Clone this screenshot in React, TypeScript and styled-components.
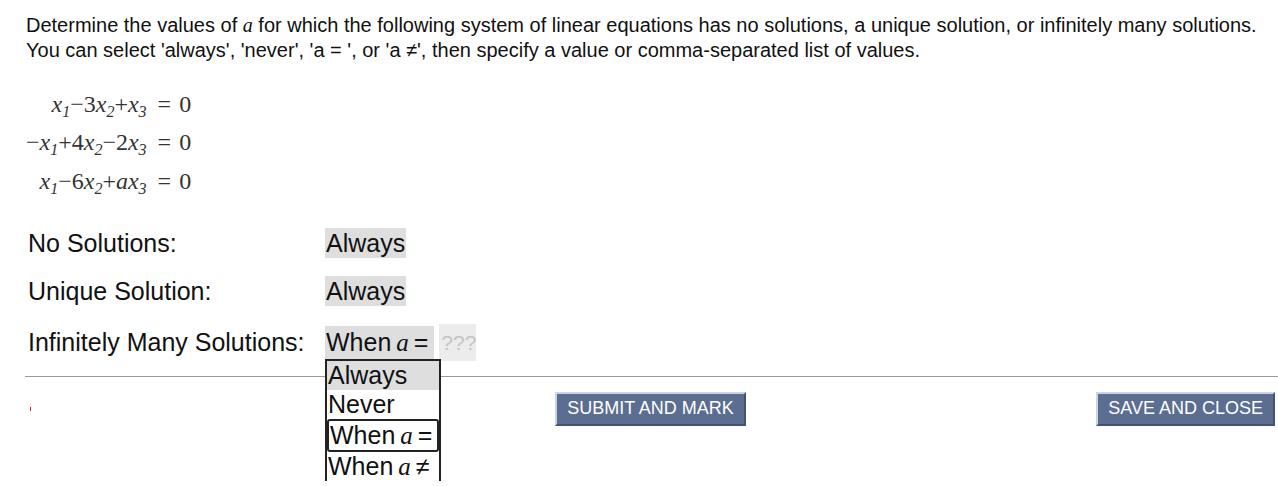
import React from "react";
import styled, { createGlobalStyle } from "styled-components";

const GlobalStyle = createGlobalStyle`
  html, body {
    margin: 0;
    padding: 0;
    background: #fff;
  }
  body {
    font-family: "Liberation Sans", Arial, sans-serif;
    color: #111;
  }
`;

const Page = styled.div`
  width: 1278px;
  height: 486px;
  overflow: hidden;
  padding: 13px 3px 0 26px;
  box-sizing: border-box;
`;

const Prompt = styled.p`
  margin: 0;
  font-size: 20px;
  line-height: 25px;
`;

const MathVar = styled.i`
  font-family: "Liberation Serif", "Times New Roman", serif;
  font-style: italic;
`;

const EqTable = styled.table`
  margin: 22px 0 0 0;
  border-collapse: collapse;
  font-family: "Liberation Serif", "Times New Roman", serif;
  font-size: 24px;
  color: #333;
`;

const EqLhs = styled.td`
  text-align: right;
  padding: 0;
  height: 38.5px;
  white-space: nowrap;
`;

const EqRhs = styled.td`
  padding: 0 0 0 11px;
  white-space: nowrap;
  word-spacing: 2px;
`;

const Sub = styled.sub`
  font-size: 16px;
  vertical-align: -5px;
  line-height: 0;
  font-style: italic;
`;

const Answers = styled.div`
  margin-top: 27px;
  margin-left: 2px;
  display: grid;
  grid-template-columns: 297px 1fr;
  row-gap: 18px;
  align-items: center;
`;

const Label = styled.div`
  font-size: 25px;
  line-height: 30px;
`;

const ValueCell = styled.div`
  display: flex;
  align-items: center;
  gap: 5px;
  position: relative;
`;

const Choice = styled.div`
  background: #dedede;
  font-size: 25px;
  line-height: 30px;
  height: 30px;
  padding: 0 1px;
  white-space: nowrap;
`;

const ChoiceWide = styled(Choice)`
  height: 33px;
  line-height: 33px;
  padding: 0 6px 0 1px;
  word-spacing: -2px;
`;

const BlankInput = styled.div`
  background: #ececec;
  color: #c4c4c4;
  font-size: 21px;
  height: 37px;
  line-height: 37px;
  padding: 0 2px;
  width: 33px;
`;

const Menu = styled.ul`
  position: absolute;
  top: 35px;
  left: 0;
  width: 112px;
  margin: 0;
  padding: 0;
  list-style: none;
  border: 2px solid #222;
  border-bottom: none;
  background: #fff;
  z-index: 2;
`;

const MenuItem = styled.li<{ $hover?: boolean; $focus?: boolean }>`
  font-size: 25px;
  height: ${(p) => (p.$focus ? "33px" : "29px")};
  line-height: 29px;
  padding: 0 1px;
  background: ${(p) => (p.$hover ? "#dedede" : "transparent")};
  border: ${(p) => (p.$focus ? "2px solid #222" : "none")};
  border-radius: ${(p) => (p.$focus ? "3px" : "0")};
  box-sizing: border-box;
  white-space: nowrap;
  word-spacing: -2px;
`;

const Rule = styled.hr`
  margin: 15px -3px 0 -1px;
  border: none;
  border-top: 1px solid #999;
  height: 0;
`;

const Footer = styled.div`
  display: grid;
  grid-template-columns: 1fr auto 1fr;
  align-items: center;
  margin-top: 15px;
`;

const Marker = styled.span`
  justify-self: start;
  display: block;
  width: 1px;
  height: 4px;
  margin-left: 4px;
  background: #d22;
`;

const ActionButton = styled.button<{ $end?: boolean }>`
  justify-self: ${(p) => (p.$end ? "end" : "center")};
  font-family: "Liberation Sans", Arial, sans-serif;
  font-size: 18px;
  color: #fff;
  background: #5b6d90;
  border-style: solid;
  border-width: 2px;
  border-color: #c9d4e4 #44536f #44536f #c9d4e4;
  padding: 0 10px;
  height: 34px;
  cursor: pointer;
`;

function A() {
  return <MathVar>a</MathVar>;
}

function X({ n }: { n: number }) {
  return (
    <>
      <MathVar>x</MathVar>
      <Sub>{n}</Sub>
    </>
  );
}

export default function App() {
  return (
    <>
      <GlobalStyle />
      <Page>
        <Prompt>
          Determine the values of <A /> for which the following system of
          linear equations has no solutions, a unique solution, or infinitely
          many solutions.
          <br />
          You can select 'always', 'never', 'a = ', or 'a ≠', then specify a
          value or comma-separated list of values.
        </Prompt>

        <EqTable>
          <tbody>
            <tr>
              <EqLhs>
                <X n={1} />−3<X n={2} />+<X n={3} />
              </EqLhs>
              <EqRhs>= 0</EqRhs>
            </tr>
            <tr>
              <EqLhs>
                −<X n={1} />+4<X n={2} />−2<X n={3} />
              </EqLhs>
              <EqRhs>= 0</EqRhs>
            </tr>
            <tr>
              <EqLhs>
                <X n={1} />−6<X n={2} />+<MathVar>a</MathVar>
                <X n={3} />
              </EqLhs>
              <EqRhs>= 0</EqRhs>
            </tr>
          </tbody>
        </EqTable>

        <Answers>
          <Label>No Solutions:</Label>
          <ValueCell>
            <Choice>Always</Choice>
          </ValueCell>

          <Label>Unique Solution:</Label>
          <ValueCell>
            <Choice>Always</Choice>
          </ValueCell>

          <Label>Infinitely Many Solutions:</Label>
          <ValueCell>
            <ChoiceWide>
              When <A /> =
            </ChoiceWide>
            <BlankInput>???</BlankInput>
            <Menu>
              <MenuItem $hover>Always</MenuItem>
              <MenuItem>Never</MenuItem>
              <MenuItem $focus>
                When <A /> =
              </MenuItem>
              <MenuItem>
                When <A /> ≠
              </MenuItem>
            </Menu>
          </ValueCell>
        </Answers>

        <Rule />

        <Footer>
          <Marker />
          <ActionButton>SUBMIT AND MARK</ActionButton>
          <ActionButton $end>SAVE AND CLOSE</ActionButton>
        </Footer>
      </Page>
    </>
  );
}
